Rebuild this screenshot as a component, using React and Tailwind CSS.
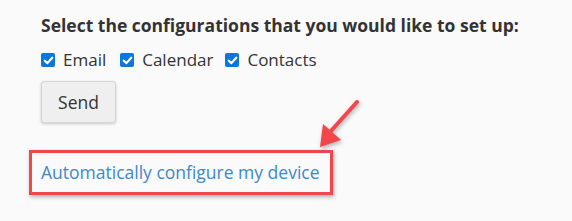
function Check({ label, className = "" }) {
  return (
    <label className={"flex items-center " + className}>
      <span className="w-[14px] h-[14px] rounded-[2px] bg-[#0b75e0] flex items-center justify-center">
        <svg width="11" height="11" viewBox="0 0 10 10"><path d="M1.6 5.2 L4 7.4 L8.4 2.5" fill="none" stroke="white" strokeWidth="2" strokeLinecap="round" strokeLinejoin="round" /></svg>
      </span>
      <span className="ml-[8px]">{label}</span>
    </label>
  );
}

export default function App() {
  return (
    <div className="relative w-[572px] h-[221px] bg-[#fafafa] overflow-hidden" style={{ fontFamily: '"Open Sans", sans-serif' }}>
      <div className="pl-[41px] pt-[12px] flex flex-col items-start">
        <div className="text-[17.5px] font-bold text-[#333333] leading-[26px]">Select the configurations that you would like to set up:</div>
        <div className="flex items-center mt-[10px] text-[17px] text-[#333333] leading-[24px]">
          <Check label="Email" />
          <Check label="Calendar" className="ml-[14px]" />
          <Check label="Contacts" className="ml-[12px]" />
        </div>
        <button className="mt-[9px] w-[75px] h-[42px] bg-[#efefef] border border-[#d6d6d6] rounded-[3px] shadow-[0_1px_3px_rgba(0,0,0,0.2)] text-[17.5px] text-[#333333]">Send</button>
        <div className="mt-[27px] -ml-[12px] border-[3px] border-[#f2464b] pl-[9px] pr-[10px] py-[7px] shadow-[1px_2px_4px_rgba(0,0,0,0.3)]">
          <span className="text-[17.5px] text-[#3f88c9] leading-[24px]">Automatically configure my device</span>
        </div>
      </div>
      <svg className="absolute left-0 top-0" width="572" height="221" viewBox="0 0 572 221" style={{ filter: 'drop-shadow(1px 2px 2px rgba(0,0,0,0.3))' }}>
        <line x1="357" y1="102" x2="330" y2="132" stroke="#f2464b" strokeWidth="4" strokeLinecap="round" />
        <polygon points="320,147 323,124 341,140" fill="#f2464b" />
      </svg>
    </div>
  );
}
